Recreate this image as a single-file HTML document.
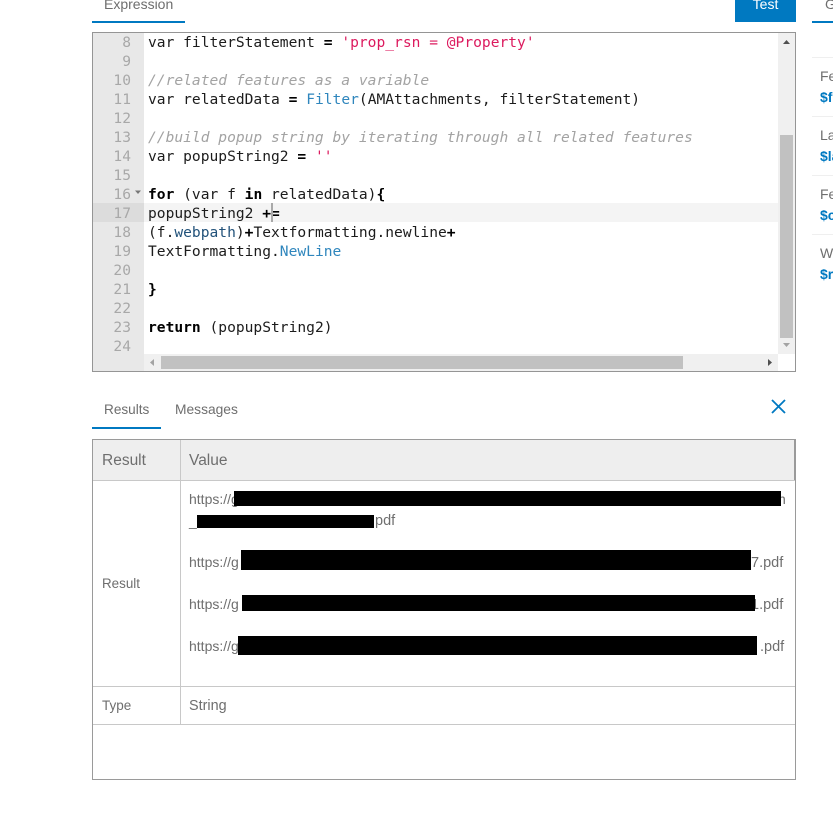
<!DOCTYPE html>
<html><head><meta charset="utf-8">
<style>
html,body{margin:0;padding:0;background:#fff}
#p{position:relative;width:833px;height:821px;overflow:hidden;background:#fff;font-family:"Liberation Sans",sans-serif;color:#6e6e6e}
#p div{position:absolute}
.t{white-space:nowrap;line-height:20px;height:20px}
.c{left:148px;white-space:pre;font:14.6px/19px "DejaVu Sans Mono",monospace;height:19px;color:#1c1c1c}
.n{left:100px;width:31px;text-align:right;font:14.6px/19px "DejaVu Sans Mono",monospace;height:19px;color:#a8a8a8}
.k{font-weight:bold;color:#000}
.s{color:#dc1a5e}
.m{font-style:italic;color:#a3a3a3}
.f{color:#2f86bd}
.w{color:#22527a}
.r{background:#000}
</style></head><body><div id="p">

<div class="t" style="left:104px;top:-6px;font-size:14px">Expression</div>
<div style="left:92px;top:21px;width:93px;height:2px;background:#0079c1"></div>
<div style="left:735px;top:0;width:61px;height:22px;background:#0079c1"></div>
<div class="t" style="left:735px;top:-6px;width:61px;text-align:center;font-size:14px;color:#fff">Test</div>

<div style="left:812px;top:21px;width:21px;height:2px;background:#0079c1"></div>
<div class="t" style="left:825px;top:-6px;font-size:14px">G</div>
<div style="left:812px;top:57px;width:21px;height:1px;background:#efefef"></div>
<div style="left:812px;top:116px;width:21px;height:1px;background:#efefef"></div>
<div style="left:812px;top:175px;width:21px;height:1px;background:#efefef"></div>
<div style="left:812px;top:234px;width:21px;height:1px;background:#efefef"></div>
<div class="t" style="left:820px;top:66px;font-size:14px">Fe</div>
<div class="t" style="left:820px;top:87px;font-size:14px;color:#0079c1;font-weight:bold">$f</div>
<div class="t" style="left:820px;top:125px;font-size:14px">La</div>
<div class="t" style="left:820px;top:146px;font-size:14px;color:#0079c1;font-weight:bold">$la</div>
<div class="t" style="left:820px;top:184px;font-size:14px">Fe</div>
<div class="t" style="left:820px;top:205px;font-size:14px;color:#0079c1;font-weight:bold">$c</div>
<div class="t" style="left:820px;top:243px;font-size:14px">W</div>
<div class="t" style="left:820px;top:264px;font-size:14px;color:#0079c1;font-weight:bold">$r</div>

<!-- editor -->
<div style="left:92px;top:32px;width:702px;height:338px;border:1px solid #959595;background:#fff"></div>
<div style="left:93px;top:33px;width:51px;height:338px;background:#e8e8e8"></div>
<div style="left:93px;top:203px;width:51px;height:19px;background:#dcdcdc"></div>
<div style="left:144px;top:203px;width:634px;height:19px;background:#f4f4f4"></div>

<div class="n" style="top:33px">8</div>
<div class="n" style="top:52px">9</div>
<div class="n" style="top:71px">10</div>
<div class="n" style="top:90px">11</div>
<div class="n" style="top:109px">12</div>
<div class="n" style="top:128px">13</div>
<div class="n" style="top:147px">14</div>
<div class="n" style="top:166px">15</div>
<div class="n" style="top:185px">16</div>
<div class="n" style="top:204px">17</div>
<div class="n" style="top:223px">18</div>
<div class="n" style="top:242px">19</div>
<div class="n" style="top:261px">20</div>
<div class="n" style="top:280px">21</div>
<div class="n" style="top:299px">22</div>
<div class="n" style="top:318px">23</div>
<div class="n" style="top:337px">24</div>
<svg style="position:absolute;left:135px;top:190px" width="7" height="5"><path d="M0 0.5H6L3 4Z" fill="#777"/></svg>

<div class="c" style="top:33px">var filterStatement <span class="k">=</span> <span class="s">'prop_rsn = @Property'</span></div>
<div class="c m" style="top:71px">//related features as a variable</div>
<div class="c" style="top:90px">var relatedData <span class="k">=</span> <span class="f">Filter</span>(AMAttachments, filterStatement)</div>
<div class="c m" style="top:128px">//build popup string by iterating through all related features</div>
<div class="c" style="top:147px">var popupString2 <span class="k">=</span> <span class="s">''</span></div>
<div class="c" style="top:185px"><span class="k">for</span> (var f <span class="k">in</span> relatedData)<span class="k">{</span></div>
<div class="c" style="top:204px">popupString2 <span class="k">+=</span></div>
<div style="left:271px;top:203px;width:2px;height:19px;background:#a9a9a9"></div>
<div class="c" style="top:223px">(f.<span class="w">webpath</span>)<span class="k">+</span>Textformatting.newline<span class="k">+</span></div>
<div class="c" style="top:242px">TextFormatting.<span class="f">NewLine</span></div>
<div class="c" style="top:280px"><span class="k">}</span></div>
<div class="c" style="top:318px"><span class="k">return</span> (popupString2)</div>

<!-- scrollbars -->
<div style="left:778px;top:33px;width:17px;height:321px;background:#f0f0f0"></div>
<div style="left:780px;top:135px;width:13px;height:203px;background:#c1c1c1"></div>
<svg style="position:absolute;left:782px;top:39px" width="9" height="6"><path d="M1 5H8L4.5 1Z" fill="#505050"/></svg>
<svg style="position:absolute;left:782px;top:342px" width="9" height="6"><path d="M1 1H8L4.5 5Z" fill="#a3a3a3"/></svg>
<div style="left:144px;top:354px;width:634px;height:17px;background:#f0f0f0"></div>
<div style="left:161px;top:356px;width:522px;height:13px;background:#c1c1c1"></div>
<svg style="position:absolute;left:149px;top:358px" width="6" height="9"><path d="M5 1V8L1 4.5Z" fill="#a3a3a3"/></svg>
<svg style="position:absolute;left:767px;top:358px" width="6" height="9"><path d="M1 1V8L5 4.5Z" fill="#505050"/></svg>

<!-- results tabs -->
<div class="t" style="left:104px;top:400px;font-size:13.6px">Results</div>
<div class="t" style="left:175px;top:400px;font-size:13.8px">Messages</div>
<div style="left:92px;top:427px;width:69px;height:2px;background:#0079c1"></div>
<svg style="position:absolute;left:770px;top:398px" width="17" height="17"><path d="M2 2L15 15M15 2L2 15" stroke="#0079c1" stroke-width="1.8" fill="none"/></svg>

<!-- table -->
<div style="left:92px;top:439px;width:702px;height:339px;border:1px solid #9a9a9a;background:#fff"></div>
<div style="left:93px;top:440px;width:701px;height:40px;background:#eee"></div>
<div style="left:794px;top:440px;width:1px;height:41px;background:#9a9a9a"></div>
<div style="left:93px;top:480px;width:702px;height:1px;background:#c8c8c8"></div>
<div style="left:180px;top:440px;width:1px;height:284px;background:#c8c8c8"></div>
<div style="left:93px;top:686px;width:702px;height:1px;background:#c8c8c8"></div>
<div style="left:93px;top:724px;width:702px;height:1px;background:#c8c8c8"></div>

<div class="t" style="left:102px;top:451px;font-size:15.5px">Result</div>
<div class="t" style="left:189px;top:451px;font-size:15.5px">Value</div>
<div class="t" style="left:102px;top:574px;font-size:13.4px">Result</div>
<div class="t" style="left:102px;top:696px;font-size:13.5px">Type</div>
<div class="t" style="left:189px;top:696px;font-size:14.4px">String</div>

<div class="t" style="left:189px;top:489px;font-size:14px">https://g</div>
<div class="t" style="left:778px;top:489px;font-size:14px">n</div>
<div class="t" style="left:189px;top:511px;font-size:14px">_</div>
<div class="t" style="left:375px;top:511px;font-size:14.5px">pdf</div>
<div class="t" style="left:189px;top:552px;font-size:14px">https://g</div>
<div class="t" style="left:751px;top:553px;font-size:14.5px">7.pdf</div>
<div class="t" style="left:189px;top:594px;font-size:14px">https://g</div>
<div class="t" style="left:751px;top:595px;font-size:14.5px">1.pdf</div>
<div class="t" style="left:189px;top:636px;font-size:14px">https://g</div>
<div class="t" style="left:760px;top:637px;font-size:14.5px">.pdf</div>

<div class="r" style="left:234px;top:491px;width:547px;height:15px"></div>
<div class="r" style="left:197px;top:515px;width:177px;height:13px"></div>
<div class="r" style="left:241px;top:550px;width:510px;height:20px"></div>
<div class="r" style="left:242px;top:595px;width:513px;height:16px"></div>
<div class="r" style="left:238px;top:636px;width:519px;height:19px"></div>

</div></body></html>
